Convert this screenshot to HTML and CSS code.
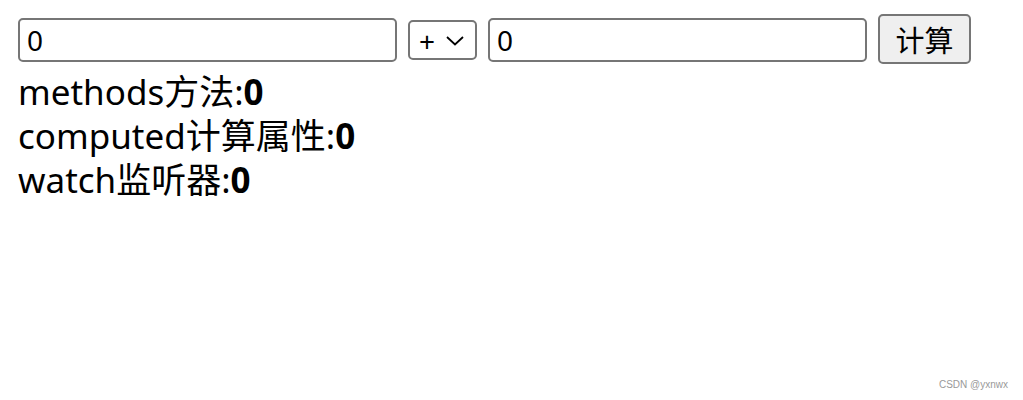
FILE: index.html
```html
<!DOCTYPE html>
<html lang="zh">
<head>
<meta charset="utf-8">
<title>计算器</title>
<link rel="stylesheet" href="styles.css">
</head>
<body>
<div class="app">
  <div class="controls">
    <input class="num" type="text" value="0">
    <span class="op-wrap">
      <select class="op">
        <option>+</option>
        <option>-</option>
        <option>*</option>
        <option>/</option>
      </select>
      <svg class="chev" width="18" height="10" viewBox="0 0 18 10"><path d="M1 1 L9 8.5 L17 1" fill="none" stroke="#000" stroke-width="1.8"/></svg>
    </span>
    <input class="num" type="text" value="0">
    <button class="calc" type="button">计算</button>
  </div>
  <div class="results">
    <div class="result">methods方法:<b>0</b></div>
    <div class="result">computed计算属性:<b>0</b></div>
    <div class="result">watch监听器:<b>0</b></div>
  </div>
</div>
<div class="mark">CSDN @yxnwx</div>
</body>
</html>
```
FILE: styles.css
```css
html, body {
  margin: 0;
  padding: 0;
  background: #fff;
}
body {
  font-family: "Noto Sans", "Noto Sans CJK SC", sans-serif;
  color: #000;
  height: 400px;
  position: relative;
}
.app {
  padding: 14px 0 0 18px;
}
.controls {
  display: flex;
  align-items: center;
  gap: 11px;
  height: 50px;
}
.num {
  box-sizing: border-box;
  width: 379px;
  height: 44px;
  border: 2px solid #767676;
  border-radius: 5px;
  padding: 0 0 0 7px;
  font-family: "Noto Sans", "Noto Sans CJK SC", sans-serif;
  font-size: 28px;
  color: #000;
  background: #fff;
  margin-top: 2px;
}
.op-wrap {
  position: relative;
  display: flex;
  margin-top: 1px;
}
.op {
  -webkit-appearance: none;
  appearance: none;
  box-sizing: border-box;
  width: 69px;
  height: 40px;
  border: 2px solid #767676;
  border-radius: 5px;
  padding: 0 0 0 9px;
  font-family: "Noto Sans", "Noto Sans CJK SC", sans-serif;
  font-size: 28px;
  color: #000;
  background: #fff;
}
.chev {
  position: absolute;
  left: 38px;
  top: 16px;
  pointer-events: none;
}
.calc {
  box-sizing: border-box;
  width: 93px;
  height: 50px;
  border: 2px solid #767676;
  border-radius: 5px;
  background: #efefef;
  font-family: "Noto Sans CJK SC", sans-serif;
  font-size: 29px;
  color: #000;
  padding: 0;
}
.results {
  padding-top: 6px;
}
.result {
  font-size: 35px;
  line-height: 44px;
}
.result b {
  font-weight: 700;
}
.mark {
  position: absolute;
  right: 15px;
  bottom: 10px;
  font-family: "Liberation Sans", Arial, sans-serif;
  font-size: 10px;
  color: #999;
}
```
